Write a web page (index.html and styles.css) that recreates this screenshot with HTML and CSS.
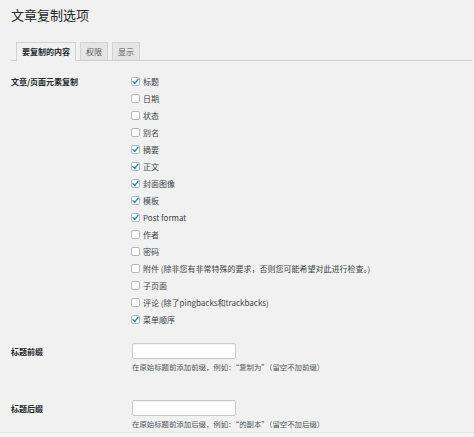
FILE: index.html
```html
<!DOCTYPE html>
<html lang="zh-CN">
<head>
<meta charset="utf-8">
<title>文章复制选项</title>
<link rel="stylesheet" href="styles.css">
</head>
<body>
<div class="wrap">
  <h1 class="title">文章复制选项</h1>
  <nav class="tabs">
    <span class="tab active">要复制的内容</span>
    <span class="tab">权限</span>
    <span class="tab">显示</span>
  </nav>
  <div class="form">
    <div class="row row-first">
      <div class="label">文章/页面元素复制</div>
      <ul class="checks">
        <li><span class="cb on"><svg viewBox="0 0 9 9"><path d="M1.9 4.6 L3.7 6.5 L7.2 2.2"/></svg></span>标题</li>
        <li><span class="cb"></span>日期</li>
        <li><span class="cb"></span>状态</li>
        <li><span class="cb"></span>别名</li>
        <li><span class="cb on"><svg viewBox="0 0 9 9"><path d="M1.9 4.6 L3.7 6.5 L7.2 2.2"/></svg></span>摘要</li>
        <li><span class="cb on"><svg viewBox="0 0 9 9"><path d="M1.9 4.6 L3.7 6.5 L7.2 2.2"/></svg></span>正文</li>
        <li><span class="cb on"><svg viewBox="0 0 9 9"><path d="M1.9 4.6 L3.7 6.5 L7.2 2.2"/></svg></span>封面图像</li>
        <li><span class="cb on"><svg viewBox="0 0 9 9"><path d="M1.9 4.6 L3.7 6.5 L7.2 2.2"/></svg></span>模板</li>
        <li><span class="cb on"><svg viewBox="0 0 9 9"><path d="M1.9 4.6 L3.7 6.5 L7.2 2.2"/></svg></span>Post format</li>
        <li><span class="cb"></span>作者</li>
        <li><span class="cb"></span>密码</li>
        <li><span class="cb"></span>附件 (除非您有非常特殊的要求，否则您可能希望对此进行检查。)</li>
        <li><span class="cb"></span>子页面</li>
        <li><span class="cb"></span>评论 (除了pingbacks和trackbacks)</li>
        <li><span class="cb on"><svg viewBox="0 0 9 9"><path d="M1.9 4.6 L3.7 6.5 L7.2 2.2"/></svg></span>菜单顺序</li>
      </ul>
    </div>
    <div class="row row-prefix">
      <div class="label label-input">标题前缀</div>
      <div class="field">
        <span class="input"></span>
        <p class="desc">在原始标题前添加前缀，例如：“复制为”（留空不加前缀）</p>
      </div>
    </div>
    <div class="row row-suffix">
      <div class="label label-input">标题后缀</div>
      <div class="field">
        <span class="input"></span>
        <p class="desc">在原始标题前添加后缀，例如：“的副本”（留空不加后缀）</p>
      </div>
    </div>
  </div>
</div>
<div class="bottom-band"></div>
</body>
</html>
```

FILE: styles.css
```css
html, body {
  margin: 0;
  padding: 0;
  background: #f1f1f1;
  height: 437px;
  overflow: hidden;
}
body {
  font-family: "Noto Sans CJK SC", "Noto Sans", sans-serif;
  color: #23282d;
  font-size: 8px;
  position: relative;
}
.wrap {
  padding: 7px 0 0 11px;
  margin-right: 2px;
}
.title {
  margin: 0;
  font-size: 13px;
  font-weight: 400;
  line-height: 16px;
  color: #23282d;
}
.tabs {
  display: flex;
  gap: 4px;
  margin-top: 19px;
  padding-left: 5px;
  border-bottom: 1px solid #cfcfcf;
  height: 18px;
}
.tab {
  display: block;
  height: 18px;
  line-height: 18px;
  padding: 0 5px;
  box-sizing: border-box;
  background: #e5e5e5;
  border: 1px solid #d2d2d2;
  border-bottom: none;
  color: #555;
  font-size: 8px;
}
.tab.active {
  background: #f1f1f1;
  color: #23282d;
  font-weight: 700;
  height: 19px;
  padding: 0 5px;
}
.row {
  display: grid;
  grid-template-columns: 120px 1fr;
}
.row-first {
  padding-top: 12px;
}
.label {
  font-weight: 700;
  line-height: 9px;
  padding-top: 4px;
}
.label-input {
  line-height: 16px;
  padding-top: 1px;
}
.checks {
  list-style: none;
  margin: 0;
  padding: 0;
}
.checks li {
  display: flex;
  align-items: center;
  height: 17px;
  line-height: 9px;
  color: #3c434a;
}
.cb {
  flex: none;
  width: 9px;
  height: 9px;
  box-sizing: border-box;
  border: 1px solid #b4b9be;
  border-radius: 2px;
  background: #fff;
  margin-right: 3px;
  display: flex;
  align-items: center;
  justify-content: center;
}
.cb svg {
  width: 9px;
  height: 9px;
  flex: none;
}
.cb path {
  fill: none;
  stroke: #1e8cbe;
  stroke-width: 1.3;
  stroke-linecap: round;
  stroke-linejoin: round;
}
.row-prefix {
  margin-top: 15px;
}
.row-suffix {
  margin-top: 28px;
}
.field {
  padding-left: 1px;
}
.input {
  display: block;
  width: 104px;
  height: 16px;
  box-sizing: border-box;
  background: #fff;
  border: 1px solid #c9c9c9;
  border-radius: 2px;
  box-shadow: inset 0 1px 1px rgba(0,0,0,0.05);
}
.desc {
  margin: 3px 0 0;
  font-size: 7.4px;
  line-height: 10px;
  color: #50575e;
}
.bottom-band {
  position: absolute;
  left: 0;
  right: 0;
  bottom: 0;
  height: 4px;
  background: #f4f4f4;
  border-top: 1px solid #e4e4e4;
}
```
